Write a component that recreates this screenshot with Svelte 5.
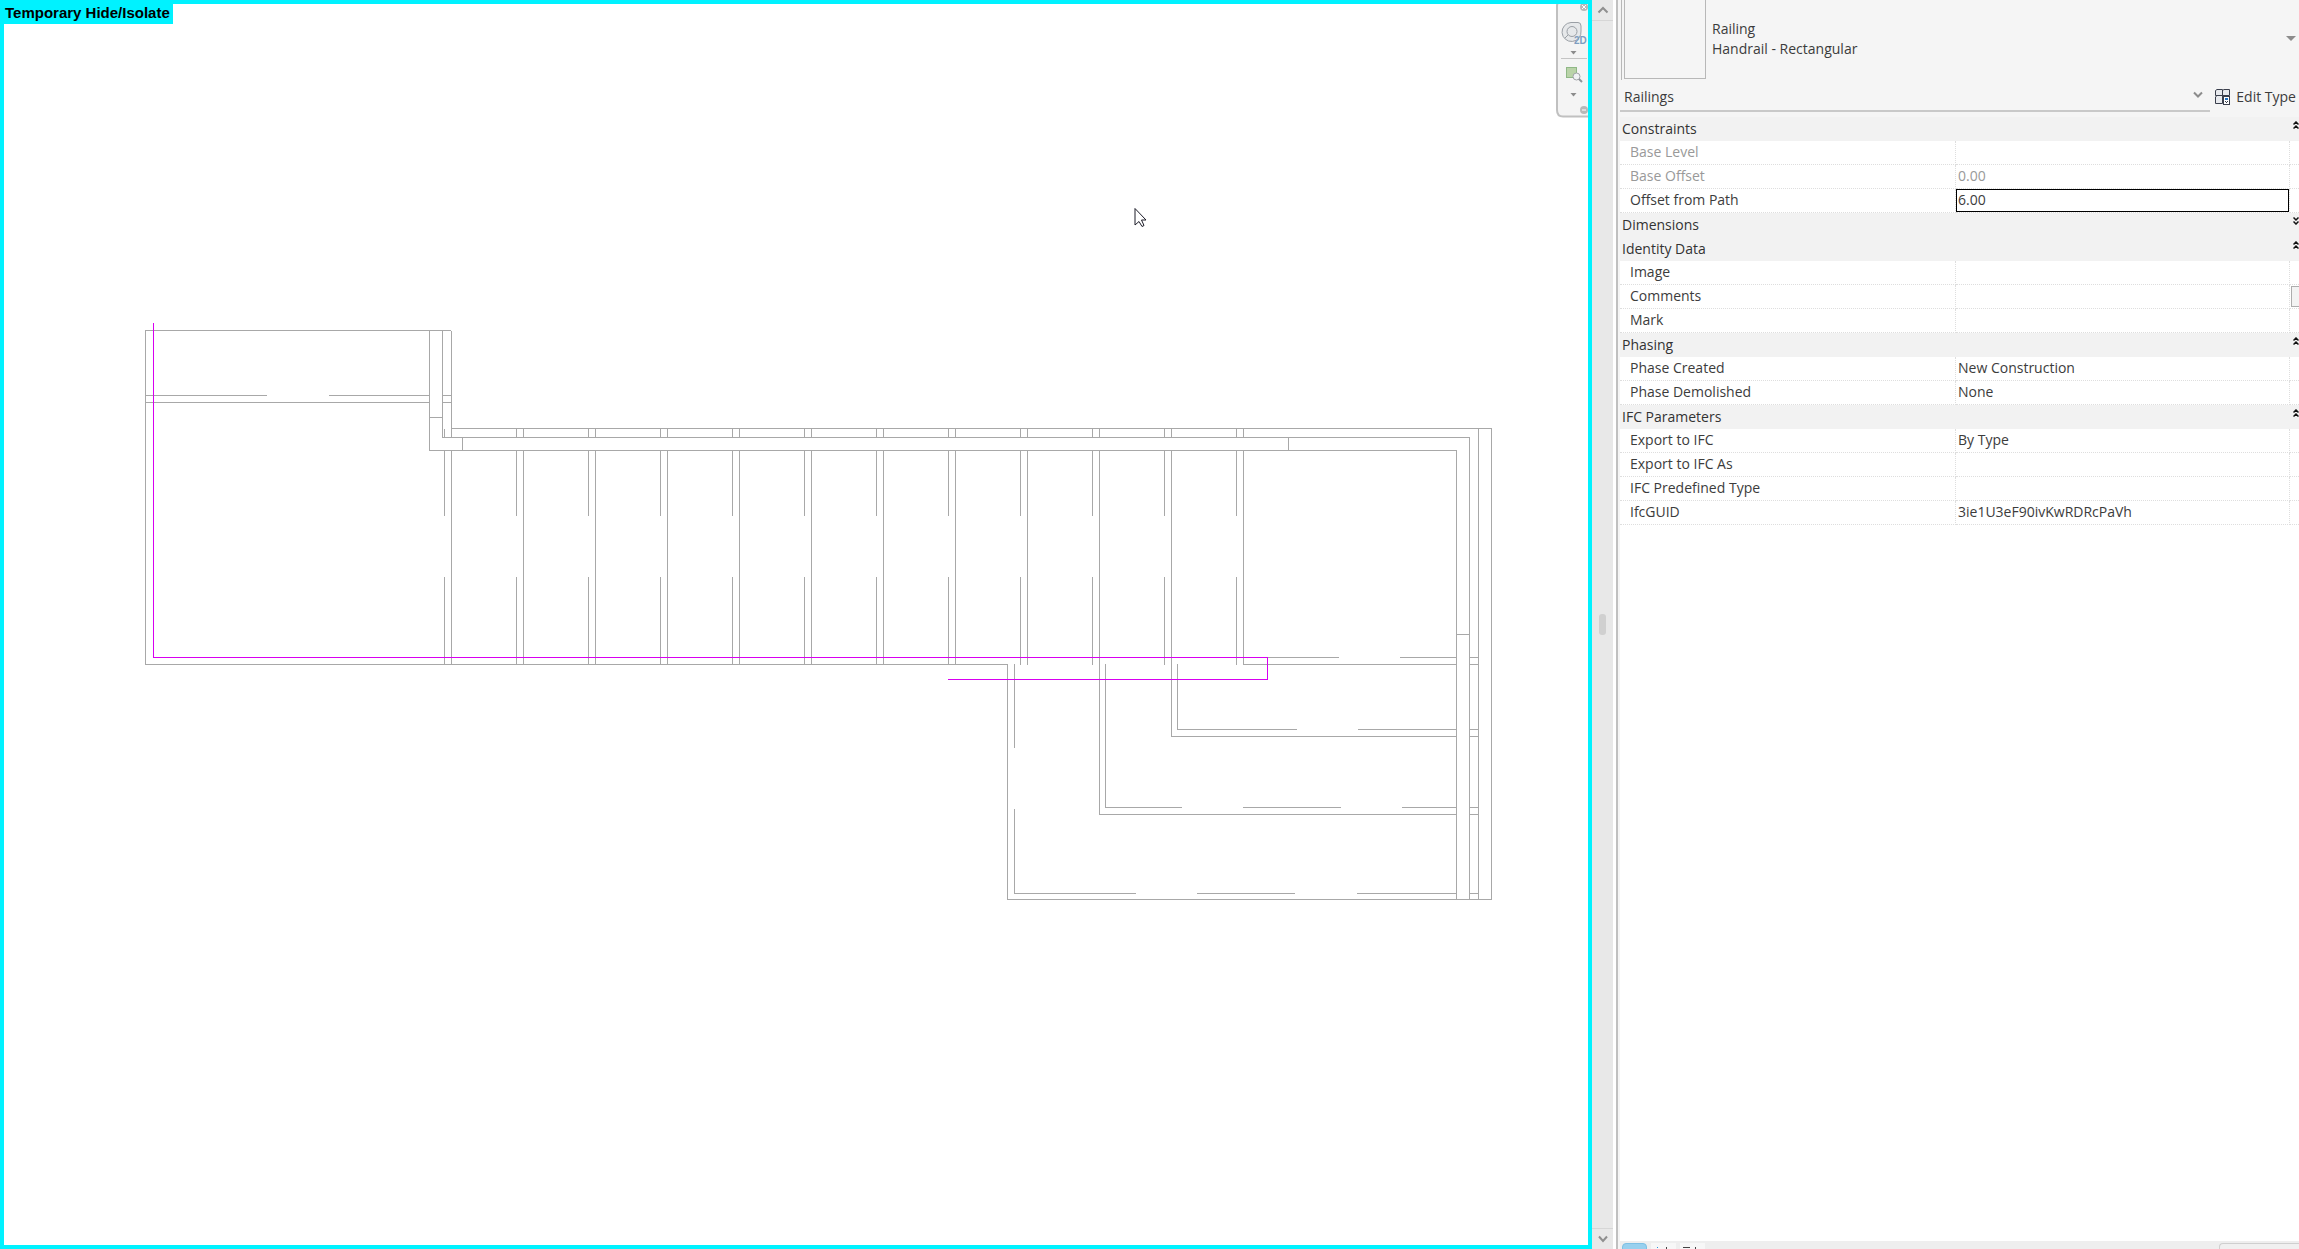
<script lang="ts">
  interface Row {
    name: string;
    value: string;
    readonly?: boolean;
    active?: boolean;
    more?: boolean;
  }

  interface Group {
    title: string;
    open: boolean;
    rows: Row[];
  }

  let category = $state('Railings');

  let groups: Group[] = $state([
    {
      title: 'Constraints',
      open: true,
      rows: [
        { name: 'Base Level', value: '', readonly: true },
        { name: 'Base Offset', value: '0.00', readonly: true },
        { name: 'Offset from Path', value: '6.00', active: true }
      ]
    },
    { title: 'Dimensions', open: false, rows: [] },
    {
      title: 'Identity Data',
      open: true,
      rows: [
        { name: 'Image', value: '' },
        { name: 'Comments', value: '', more: true },
        { name: 'Mark', value: '' }
      ]
    },
    {
      title: 'Phasing',
      open: true,
      rows: [
        { name: 'Phase Created', value: 'New Construction' },
        { name: 'Phase Demolished', value: 'None' }
      ]
    },
    {
      title: 'IFC Parameters',
      open: true,
      rows: [
        { name: 'Export to IFC', value: 'By Type' },
        { name: 'Export to IFC As', value: '' },
        { name: 'IFC Predefined Type', value: '' },
        { name: 'IfcGUID', value: '3ie1U3eF90ivKwRDRcPaVh' }
      ]
    }
  ]);

  // x of each riser pair, 72 units apart
  const risers = Array.from({ length: 12 }, (_, i) => 444 + i * 72);

  // solid line of each riser; two of them turn into winders below the flight
  function riserEnd(x: number) {
    if (x === 1092) return 814;
    if (x === 1164) return 736;
    return 664;
  }

  // [x1, y1, x2, y2]
  const lines = [
    // upper landing
    [145, 330, 450, 330],
    [145, 330, 145, 664],
    [429, 330, 429, 450],
    [442, 330, 442, 437],
    [451, 331, 451, 437],
    [145, 395, 266, 395],
    [329, 395, 429, 395],
    [442, 395, 451, 395],
    [145, 402, 429, 402],
    [442, 402, 451, 402],
    [429, 417, 442, 417],
    // stringers
    [451, 428, 1491, 428],
    [442, 437, 1469, 437],
    [429, 450, 1456, 450],
    [462, 437, 462, 450],
    [1288, 437, 1288, 449],
    [1456, 450, 1456, 899],
    [1469, 437, 1469, 899],
    [1478, 428, 1478, 899],
    [1491, 428, 1491, 899],
    [1456, 634, 1469, 634],
    // lower edge of the flight
    [145, 664, 1007, 664],
    [1243, 664, 1456, 664],
    [1469, 664, 1478, 664],
    [1267, 657, 1338, 657],
    [1400, 657, 1456, 657],
    [1469, 657, 1478, 657],
    // first winder
    [1177, 664, 1177, 729],
    [1177, 729, 1296, 729],
    [1358, 729, 1456, 729],
    [1469, 729, 1478, 729],
    [1171, 736, 1456, 736],
    [1469, 736, 1478, 736],
    // second winder
    [1105, 664, 1105, 807],
    [1105, 807, 1181, 807],
    [1243, 807, 1340, 807],
    [1402, 807, 1456, 807],
    [1469, 807, 1478, 807],
    [1099, 814, 1456, 814],
    [1469, 814, 1478, 814],
    // third winder
    [1007, 664, 1007, 899],
    [1014, 664, 1014, 747],
    [1014, 809, 1014, 893],
    [1014, 893, 1135, 893],
    [1197, 893, 1294, 893],
    [1357, 893, 1456, 893],
    [1469, 893, 1478, 893],
    [1007, 899, 1491, 899]
  ];
</script>

<div class="workspace">
  <main class="view">
    <svg class="plan" viewBox="4 4 1584 1241" preserveAspectRatio="xMinYMin meet" shape-rendering="crispEdges" aria-label="Stair plan">
      {#each lines as [x1, y1, x2, y2]}
        <rect class="model" x={x1} y={y1} width={x2 - x1 + 1} height={y2 - y1 + 1} />
      {/each}
      {#each risers as x}
        <rect class="model" {x} y="429" width="1" height="8" />
        <rect class="model" {x} y="450" width="1" height="66" />
        <rect class="model" {x} y="577" width="1" height="88" />
        <rect class="model" x={x + 7} y="428" width="1" height="9" />
        <rect class="model" x={x + 7} y="450" width="1" height={riserEnd(x) - 449} />
      {/each}
      <path class="sketch" d="M153.5 323V657.5H1267.5V679.5H948" />
      <path
        class="cursor"
        shape-rendering="auto"
        d="M1135 208.5V225L1139 221.5L1142 226.5L1144 225.5L1141.5 220H1146Z"
      />
    </svg>
    <span class="view-label">Temporary Hide/Isolate</span>
    <nav class="navbar" aria-label="Navigation bar">
      <svg viewBox="0 0 33 118" width="33" height="118">
        <path class="nav-frame" d="M35 1H8Q2 1 2 6V110Q2 116.5 8 116.500H35" />
        <g class="nav-dot">
          <circle cx="29" cy="7" r="4" />
          <path d="M27 5l4 4M31 5l-4 4" />
          <circle cx="29" cy="110" r="4" />
          <path d="M27 110h4" />
        </g>
        <g class="wheel">
          <path d="M16 22.500H23Q26 22.500 26 26V31A9.500 9.500 0 1 1 16 22.500Z" />
          <circle cx="17" cy="31.500" r="5" />
          <path d="M13 35l-3 3" />
        </g>
        <text class="wheel-text" x="19" y="44">2D</text>
        <path class="tri" d="M15.500 51h6l-3 3.500z" />
        <path class="rule" d="M6 58.500h26" />
        <rect class="zoom-box" x="11.500" y="67.500" width="10" height="10" />
        <circle class="lens" cx="21.500" cy="76.500" r="3.500" />
        <path class="handle" d="M24 79l3 3" />
        <path class="tri" d="M15.500 93h6l-3 3.500z" />
      </svg>
    </nav>
  </main>

  <div class="scrollbar">
    <button class="scroll-btn" aria-label="Scroll up">
      <svg viewBox="0 0 12 8" width="12" height="8"><path d="M1.500 6.500L6 2l4.500 4.500" /></svg>
    </button>
    <div class="scroll-track"><span class="scroll-grip"></span></div>
    <button class="scroll-btn down" aria-label="Scroll down">
      <svg viewBox="0 0 12 8" width="12" height="8"><path d="M2 1.500L6 6l4-4.500" /></svg>
    </button>
  </div>

  <aside class="palette">
    <button class="type-selector">
      <span class="thumb"></span>
      <span class="type-name">Railing<br />Handrail - Rectangular</span>
      <svg class="drop" viewBox="0 0 10 5" width="10" height="5"><path d="M0 0h10l-5 5z" /></svg>
    </button>

    <div class="filter-row">
      <div class="filter">
        <select bind:value={category} aria-label="Category">
          <option>Railings</option>
        </select>
        <svg viewBox="0 0 10 8" width="10" height="8"><path d="M1 1.500l4 4 4-4" /></svg>
      </div>
      <button class="edit-type">
        <svg viewBox="0 0 17 17" width="17" height="17">
          <path class="tile" d="M1.500 7.500V2.500L3 1.500H8.500V7.500ZM8.500 7.500V2.500L10 1.500H15.500V7.500ZM1.500 15.500V9L3 7.500H8.500V15.500Z" />
          <rect class="sheet" x="9.500" y="8.500" width="6" height="8" />
          <path class="sheet-head" d="M11 10h3v2h-3z" />
          <path class="sheet-dots" d="M11 13.500h1M13 13.500h1M12 14.500h1" />
        </svg>
        Edit Type
      </button>
    </div>

    <div class="grid-scroll">
      <table>
        <colgroup>
          <col class="col-name" />
          <col />
          <col class="col-more" />
        </colgroup>
        {#each groups as group}
          <tbody>
            <tr class="group">
              <th colspan="2" scope="rowgroup">{group.title}</th>
              <td>
                <button class="toggle" aria-label="Toggle {group.title}" onclick={() => (group.open = !group.open)}>
                  <svg class:flip={!group.open} viewBox="0 0 6 8" width="6" height="8">
                    <path d="M.5 3.500L3 1l2.500 2.500M.5 7.500L3 5l2.500 2.500" />
                  </svg>
                </button>
              </td>
            </tr>
            {#if group.open}
              {#each group.rows as row}
                <tr class="row" class:readonly={row.readonly}>
                  <th scope="row">{row.name}</th>
                  <td class="value">
                    <input
                      class:active={row.active}
                      type="text"
                      bind:value={row.value}
                      aria-label={row.name}
                      readonly={row.readonly}
                    />
                  </td>
                  <td class="more">
                    {#if row.more}<button class="more-btn" aria-label="Associate"></button>{/if}
                  </td>
                </tr>
              {/each}
            {/if}
          </tbody>
        {/each}
      </table>
    </div>

    <footer class="palette-footer">
      <button class="tab current" aria-label="Properties"></button>
      <button class="tab" aria-label="Sort">
        <svg viewBox="0 0 25 6" width="25" height="6">
          <path class="blue" d="M6 4h1v1h-1z" />
          <path d="M15 4h1v2h-1z" />
        </svg>
      </button>
      <button class="tab" aria-label="Filter">
        <svg viewBox="0 0 25 6" width="25" height="6">
          <path d="M3 4h7v1H3zM15 4h1v2h-1z" />
        </svg>
      </button>
      <button class="apply" aria-label="Apply"></button>
    </footer>
  </aside>
</div>

<style>
  :global(body) {
    background: #fff;
  }

  .workspace {
    display: flex;
    height: 100vh;
    overflow: hidden;
    font-family: "Open Sans", "Liberation Sans", sans-serif;
    font-size: 14px;
    color: #3c3c3c;
  }

  button,
  input,
  select {
    font: inherit;
    color: inherit;
    margin: 0;
    padding: 0;
    border: 0;
    border-radius: 0;
    background: none;
  }

  /* drawing view */
  .view {
    position: relative;
    flex: 1;
    min-width: 0;
    border: 4px solid #00f2ff;
    overflow: hidden;
  }

  .plan {
    display: block;
    width: 100%;
    height: 100%;
  }

  .model {
    fill: #a8a8a8;
  }

  .sketch {
    fill: none;
    stroke: #d800f0;
    stroke-width: 1;
  }

  .cursor {
    fill: #fff;
    stroke: #1c1c28;
    stroke-width: 1;
  }

  .view-label {
    position: absolute;
    top: 0;
    left: 0;
    height: 20px;
    line-height: 17px;
    padding: 0 3px 0 1px;
    background: #00f2ff;
    color: #000;
    font-family: "Liberation Sans", sans-serif;
    font-size: 15px;
    font-weight: bold;
  }

  .navbar {
    position: absolute;
    top: 0;
    right: 0;
    height: 114px;
    display: flex;
    align-items: flex-end;
    overflow: hidden;
  }

  .navbar svg {
    display: block;
    flex: none;
  }

  .nav-frame {
    fill: #f4f4f4;
    stroke: #c0c0c0;
    stroke-width: 2;
  }

  .nav-dot circle {
    fill: #b8b8b8;
  }

  .nav-dot path {
    stroke: #fff;
  }

  .wheel {
    fill: #e6e8ea;
    stroke: #9a9fa5;
  }

  .wheel-text {
    fill: #7d9dc0;
    font-family: "Liberation Sans", sans-serif;
    font-size: 10px;
    font-weight: bold;
  }

  .tri {
    fill: #8c8c8c;
  }

  .rule {
    stroke: #c4c4c4;
  }

  .zoom-box {
    fill: #b9d3a8;
    stroke: #8fb886;
  }

  .lens {
    fill: #f0f2f4;
    stroke: #a0a4a8;
  }

  .handle {
    stroke: #8e9398;
    stroke-width: 2;
  }

  /* splitter scrollbar */
  .scrollbar {
    display: flex;
    flex-direction: column;
    width: 21px;
    background: #e8e8e8;
  }

  .scroll-btn {
    display: flex;
    align-items: center;
    justify-content: center;
    height: 21px;
    border-bottom: 1px solid #d6d6d6;
  }

  .scroll-btn.down {
    border-bottom: 0;
    border-top: 1px solid #d6d6d6;
  }

  .scroll-btn path {
    fill: none;
    stroke: #8f8f8f;
    stroke-width: 2;
  }

  .scroll-track {
    flex: 1;
    display: flex;
    align-items: center;
    justify-content: center;
  }

  .scroll-grip {
    width: 7px;
    height: 21px;
    border-radius: 3px;
    background: #d0d0d0;
  }

  /* properties palette */
  .palette {
    display: flex;
    flex-direction: column;
    width: 679px;
    margin-left: 3px;
    border-left: 2px solid #c0c0c0;
    padding-left: 2px;
    background: #f5f5f5;
  }

  .type-selector {
    display: flex;
    align-items: flex-start;
    height: 80px;
    margin-left: 1px;
    padding-right: 3px;
    border-left: 1px solid #b8b8b8;
    text-align: left;
  }

  .thumb {
    box-sizing: border-box;
    width: 82px;
    height: 79px;
    margin-left: 2px;
    border: 1px solid #b8b8b8;
    border-top: 0;
  }

  .type-name {
    flex: 1;
    padding: 19px 0 0 6px;
    line-height: 20px;
  }

  .drop {
    margin-top: 36px;
    fill: #8c8c8c;
  }

  .filter-row {
    display: flex;
    align-items: center;
    height: 32px;
    margin-bottom: 5px;
  }

  .filter {
    display: flex;
    align-items: center;
    flex: 1;
    height: 30px;
    padding: 0 7px 0 4px;
    border-bottom: 2px solid #c9c9c9;
  }

  .filter select {
    flex: 1;
    height: 28px;
    padding-top: 2px;
    appearance: none;
    outline: 0;
  }

  .filter path {
    fill: none;
    stroke: #8c8c8c;
    stroke-width: 2;
  }

  .edit-type {
    display: flex;
    align-items: center;
    gap: 5px;
    padding: 0 3px 0 4px;
    white-space: nowrap;
  }

  .tile {
    fill: #e8eaee;
    stroke: #3a3f4c;
  }

  .sheet {
    fill: #fff;
    stroke: #3a3f4c;
  }

  .sheet-head {
    fill: #1f6fc0;
  }

  .sheet-dots {
    stroke: #3a3f4c;
  }

  .grid-scroll {
    flex: 1;
    min-height: 0;
    overflow: hidden;
    background: #fff;
  }

  table {
    width: 100%;
    border-collapse: separate;
    border-spacing: 0;
    table-layout: fixed;
  }

  .col-name {
    width: 336px;
  }

  .col-more {
    width: 9px;
  }

  tr {
    height: 24px;
  }

  th,
  td {
    box-sizing: border-box;
    height: 24px;
    padding: 0;
    font-weight: normal;
    text-align: left;
    line-height: 20px;
    vertical-align: middle;
    white-space: nowrap;
  }

  .group th,
  .group td {
    background: #f2f2f2;
  }

  .group th {
    padding-left: 2px;
    color: #333;
  }

  .toggle {
    display: flex;
    align-items: flex-start;
    width: 9px;
    height: 20px;
    padding: 2px 0 0 3px;
    box-sizing: border-box;
  }

  .toggle svg {
    display: block;
    flex: none;
  }

  .toggle path {
    fill: none;
    stroke: #111;
    stroke-width: 1.5;
  }

  .flip {
    transform: rotate(180deg);
  }

  .row th,
  .row td {
    border-bottom: 1px dotted #dedede;
  }

  .row th {
    padding: 0 0 2px 10px;
    border-right: 1px dotted #dedede;
  }

  .value {
    border-right: 1px dotted #dedede;
  }

  .row input {
    display: block;
    box-sizing: border-box;
    width: 100%;
    height: 23px;
    padding: 0 1px 2px;
    border: 1px solid transparent;
    outline: 0;
  }

  .row input.active {
    border-color: #000;
  }

  .readonly {
    color: #999;
  }

  .more-btn {
    display: block;
    width: 8px;
    height: 21px;
    margin-left: 1px;
    border: 1px solid #adadad;
    border-right: 0;
    background: #f3f3f3;
  }

  .palette-footer {
    display: flex;
    gap: 4px;
    height: 6px;
    padding: 2px 0 0 2px;
    background: #eee;
    overflow: hidden;
  }

  .tab {
    display: flex;
    align-items: flex-start;
    width: 25px;
    height: 24px;
    background: #f7f7f7;
  }

  .tab svg {
    display: block;
    flex: none;
  }

  .tab path {
    fill: #444;
  }

  .tab .blue {
    fill: #2a8fe0;
  }

  .tab.current {
    border: 1px solid #7ec0e4;
    border-radius: 4px;
    background: #98d0ee;
  }

  .apply {
    width: 80px;
    height: 24px;
    margin-left: auto;
    border: 1px solid #cfcfcf;
    border-right: 0;
    border-radius: 4px 0 0 4px;
    background: #f0f0f0;
  }
</style>
